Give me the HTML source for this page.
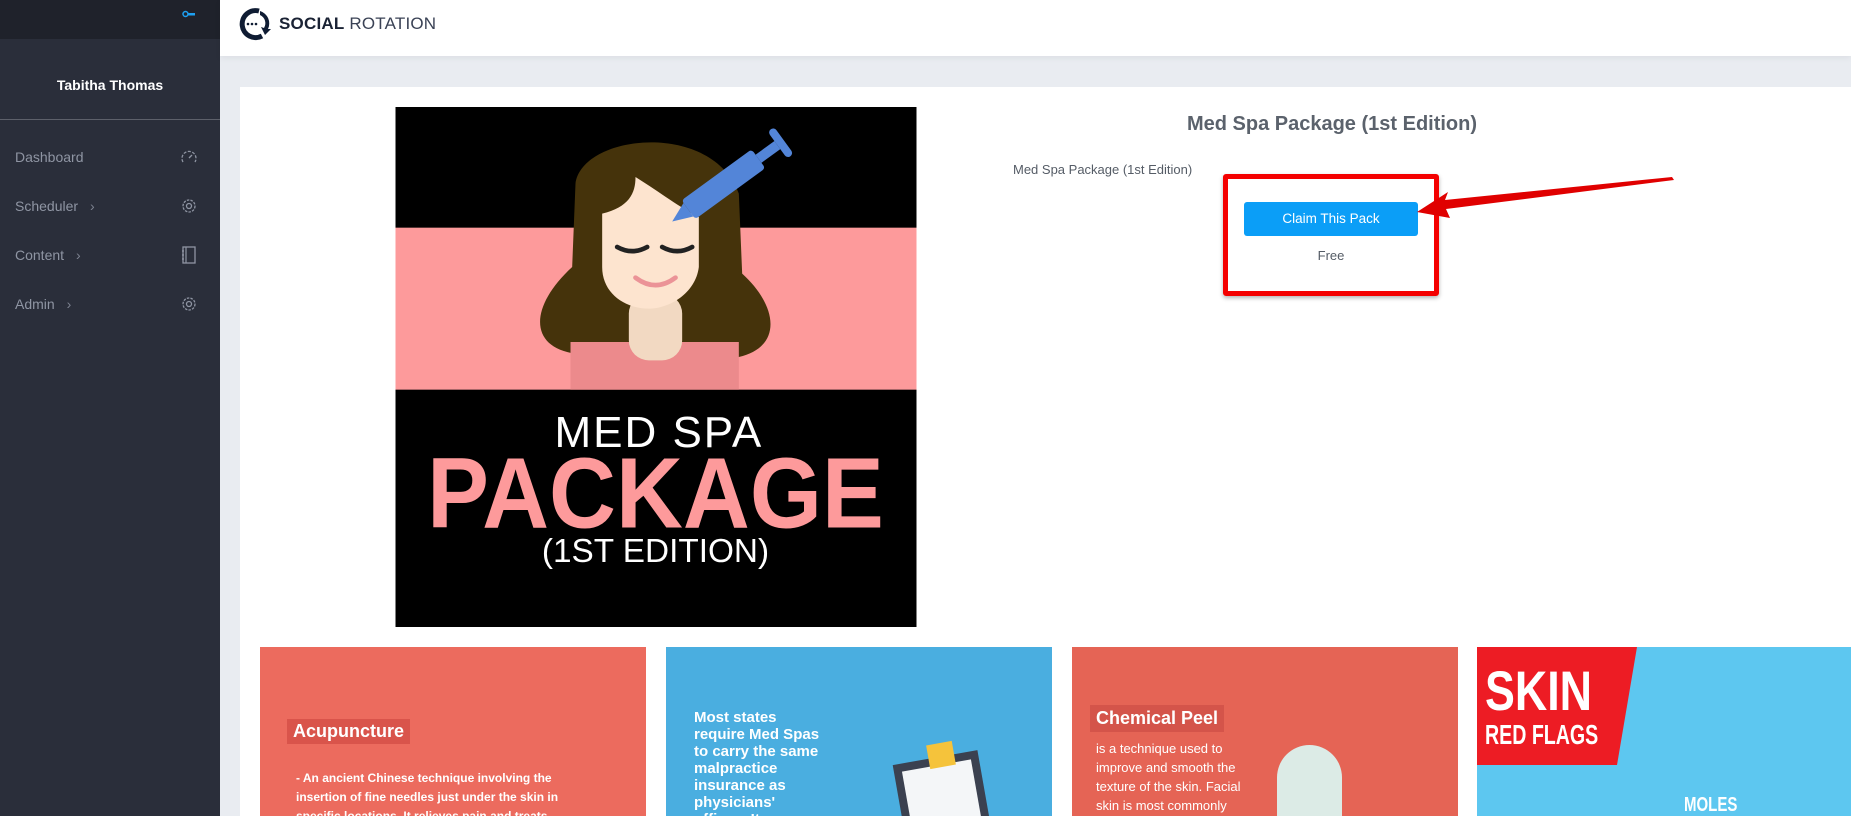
<!DOCTYPE html>
<html><head><meta charset="utf-8"><style>
*{margin:0;padding:0;box-sizing:border-box}
html,body{width:1851px;height:816px;overflow:hidden}
body{background:#e9ecf1;font-family:"Liberation Sans",sans-serif;position:relative}
.sb{position:absolute;left:0;top:0;width:220px;height:816px;background:#2a2e3a}
.sbtop{position:absolute;left:0;top:0;width:220px;height:39px;background:#1f222b}
.name{position:absolute;left:0;width:220px;top:77px;text-align:center;color:#fff;font-size:14px;font-weight:bold}
.div{position:absolute;left:0;top:119px;width:220px;height:1px;background:#5d606a}
.nav{position:absolute;left:15px;color:#8f95a3;font-size:14px}
.nav i{font-style:normal;margin-left:8px;color:#7d8290}
.ic{position:absolute;left:180px}
.hdr{position:absolute;left:220px;top:0;width:1631px;height:56px;background:#fff;box-shadow:0 2px 6px rgba(0,0,0,.06)}
.card{position:absolute;left:240px;top:87px;width:1611px;height:729px;background:#fff}
.c{position:absolute;top:647px;height:169px;overflow:hidden}
</style></head><body>
<div class="sb"><div class="sbtop"></div>
<svg style="position:absolute;left:182px;top:10px" width="14" height="8"><circle cx="3.5" cy="4" r="2.5" fill="none" stroke="#1ea0f0" stroke-width="1.5"/><rect x="6" y="3" width="7" height="2.5" fill="#1ea0f0"/></svg>
<div class="name">Tabitha Thomas</div><div class="div"></div>
<div class="nav" style="top:149px">Dashboard</div>
<div class="nav" style="top:198px">Scheduler <i>›</i></div>
<div class="nav" style="top:247px">Content <i>›</i></div>
<div class="nav" style="top:296px">Admin <i>›</i></div>
<svg class="ic" style="top:148px" width="18" height="18"><path d="M3 14A7 7 0 1 1 15 14" fill="none" stroke="#8f95a3" stroke-width="1.3" stroke-dasharray="3 1.5"/><path d="M9 10l3-3" stroke="#8f95a3" stroke-width="1.3"/></svg>
<svg class="ic" style="top:197px" width="18" height="18"><circle cx="9" cy="9" r="6" fill="none" stroke="#8f95a3" stroke-width="1.3" stroke-dasharray="2.5 1.2"/><circle cx="9" cy="9" r="2.5" fill="none" stroke="#8f95a3" stroke-width="1.3"/></svg>
<svg class="ic" style="top:246px" width="18" height="18"><rect x="3" y="1" width="12" height="16" fill="none" stroke="#8f95a3" stroke-width="1.3"/><path d="M6 1v16M2 5h2M2 9h2M2 13h2" stroke="#8f95a3" stroke-width="1.2"/></svg>
<svg class="ic" style="top:295px" width="18" height="18"><circle cx="9" cy="9" r="6" fill="none" stroke="#8f95a3" stroke-width="1.3" stroke-dasharray="2.5 1.2"/><circle cx="9" cy="9" r="2.5" fill="none" stroke="#8f95a3" stroke-width="1.3"/></svg>
</div>
<div class="hdr">
<svg style="position:absolute;left:15px;top:6px" width="42" height="36"><path d="M24 5A13.5 13.5 0 1 0 27 30" fill="none" stroke="#0f1c33" stroke-width="5"/><path d="M25 9A9 9 0 0 1 29 22l-3-1 4 8 6-6-3 0A13 13 0 0 0 25 5z" fill="#0f1c33"/><circle cx="13" cy="18" r="1.3" fill="#0f1c33"/><circle cx="17" cy="18" r="1.3" fill="#0f1c33"/><circle cx="21" cy="18" r="1.3" fill="#0f1c33"/></svg>
<div style="position:absolute;left:59px;top:14px;font-size:17px;color:#1a2234;letter-spacing:.2px"><b>SOCIAL</b> <span style="color:#3a4255">ROTATION</span></div>
</div>
<div class="card"></div>
<svg style="position:absolute;left:395px;top:107px" width="522" height="520" viewBox="0 0 1563 1560">
<rect width="1563" height="1560" fill="#000"/>
<rect y="362" width="1563" height="486" fill="#fd9a9b"/>
<path d="M540 230C560 80 950 40 1030 260L1040 500C1150 600 1160 720 1030 750L540 740C400 720 400 600 530 480Z" fill="#45330b"/>
<rect x="525" y="705" width="505" height="143" fill="#ec8a8c"/>
<rect x="700" y="560" width="160" height="200" rx="60" fill="#f2d9c2"/>
<path d="M620 320C700 300 720 260 720 210C800 260 850 300 910 330L910 480C900 560 820 605 760 605C690 605 620 560 620 480Z" fill="#fde4cf"/>
<path d="M665 420q45 25 90 0M800 420q45 25 90 0" stroke="#222" stroke-width="14" fill="none" stroke-linecap="round"/>
<path d="M720 512q60 45 120 0" stroke="#eb9397" stroke-width="14" fill="none" stroke-linecap="round"/>
<g transform="rotate(-36 1000 220)"><rect x="850" y="185" width="260" height="70" rx="10" fill="#5385d8"/><rect x="1110" y="205" width="70" height="30" fill="#5385d8"/><rect x="1180" y="170" width="24" height="100" rx="12" fill="#5385d8"/><path d="M850 195l-60 25 60 25z" fill="#5385d8"/></g>
<text x="790" y="1020" font-size="132" fill="#fff" text-anchor="middle" font-family="Liberation Sans" letter-spacing="6">MED SPA</text>
<text x="780" y="1262" font-size="300" fill="#fd9a9b" text-anchor="middle" font-family="Liberation Sans" font-weight="bold" textLength="1370" lengthAdjust="spacingAndGlyphs">PACKAGE</text>
<text x="780" y="1365" font-size="100" fill="#fff" text-anchor="middle" font-family="Liberation Sans">(1ST EDITION)</text>
</svg>
<div style="position:absolute;left:1010px;width:644px;top:113px;text-align:center;font-size:20px;font-weight:bold;color:#5b626c">Med Spa Package (1st Edition)</div>
<div style="position:absolute;left:1013px;top:162px;font-size:13px;color:#555c66">Med Spa Package (1st Edition)</div>
<div style="position:absolute;left:1223px;top:174px;width:216px;height:122px;border:5px solid #f40000;border-radius:3px;box-shadow:0 2px 4px rgba(0,0,0,.3)"></div>
<div style="position:absolute;left:1244px;top:202px;width:174px;height:34px;background:#0b9ef7;border-radius:3px;color:#fff;font-size:13.5px;text-align:center;line-height:34px">Claim This Pack</div>
<div style="position:absolute;left:1244px;width:174px;top:248px;text-align:center;font-size:13px;color:#555c66">Free</div>
<svg style="position:absolute;left:1400px;top:170px" width="280" height="60"><path d="M272 7L45 30 48 22 17 42 50 48 46 39 274 10z" fill="#e00000"/></svg>
<div class="c" style="left:260px;width:386px;background:#ec6b5e">
<div style="position:absolute;left:27px;top:72px;background:#d9544b;color:#fff;font-weight:bold;font-size:18px;padding:2px 6px">Acupuncture</div>
<div style="position:absolute;left:36px;top:122px;color:#fff;font-size:12px;font-weight:bold;line-height:19px;width:270px">- An ancient Chinese technique involving the insertion of fine needles just under the skin in specific locations. It relieves pain and treats...</div></div>
<div class="c" style="left:666px;width:386px;background:#4aaee0">
<div style="position:absolute;left:28px;top:62px;color:#fff;font-size:15px;font-weight:bold;line-height:17px;width:132px">Most states require Med Spas to carry the same malpractice insurance as physicians' offices. It becomes</div>
<div style="position:absolute;left:233px;top:110px;width:86px;height:80px;background:#3b4150;transform:rotate(-10deg)"><div style="margin:8px;height:80px;background:#f4f6f8"></div></div>
<div style="position:absolute;left:262px;top:96px;width:26px;height:24px;background:#f5c33b;transform:rotate(-10deg)"></div></div>
<div class="c" style="left:1072px;width:386px;background:#e56455">
<div style="position:absolute;left:18px;top:58px;background:#d4544a;color:#fff;font-weight:bold;font-size:18px;padding:3px 6px">Chemical Peel</div>
<div style="position:absolute;left:24px;top:92px;color:#fff;font-size:13px;line-height:19px;width:160px">is a technique used to improve and smooth the texture of the skin. Facial skin is most commonly treated.</div>
<div style="position:absolute;left:205px;top:98px;width:65px;height:120px;border-radius:35px;background:#dcebe6"></div></div>
<div class="c" style="left:1477px;width:374px;background:#5dc7f0">
<svg style="position:absolute;left:0;top:0" width="160" height="120"><path d="M0 0H160L140 118H0z" fill="#ed1c24"/></svg>
<div style="position:absolute;left:8px;top:16px;color:#fff;font-weight:bold;font-size:56px;line-height:56px;transform:scaleX(.8);transform-origin:left">SKIN</div>
<div style="position:absolute;left:8px;top:72px;color:#fff;font-weight:bold;font-size:28px;transform:scaleX(.7);transform-origin:left">RED FLAGS</div>
<div style="position:absolute;left:207px;top:147px;color:#fff;font-weight:bold;font-size:20px;transform:scaleX(.75);transform-origin:left">MOLES</div></div>
</body></html>
